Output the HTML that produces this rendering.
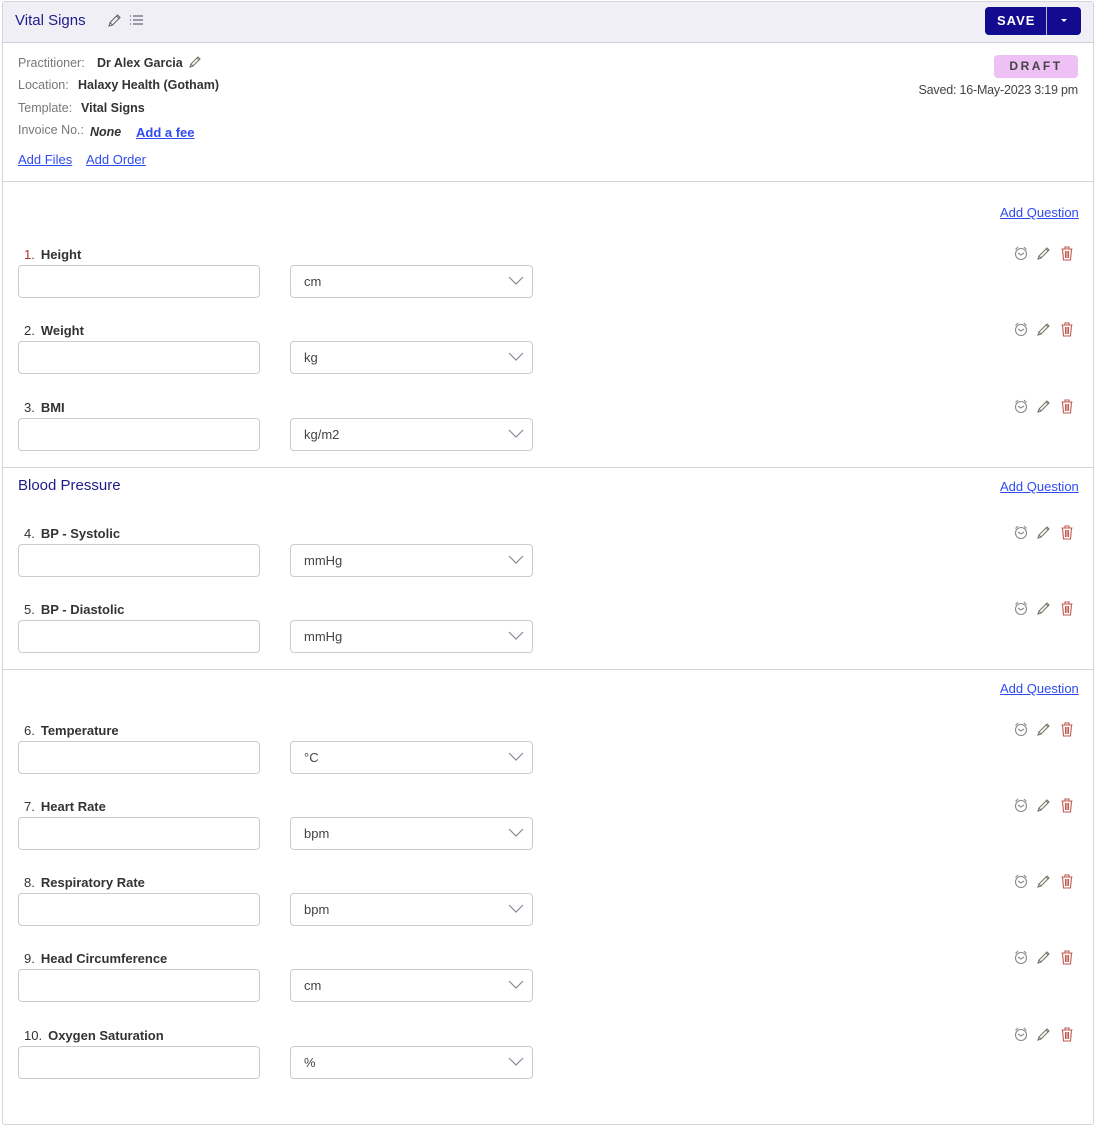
<!DOCTYPE html>
<html><head><meta charset="utf-8"><style>
*{box-sizing:border-box;margin:0;padding:0}
body{width:1096px;height:1126px;background:#fff;font-family:"Liberation Sans",sans-serif;position:relative;overflow:hidden;color:#333}
.card{position:absolute;left:2px;top:1px;width:1092px;height:1124px;border:1px solid #d3d3da;border-radius:3px}
.hdr{position:absolute;left:3px;top:2px;width:1090px;height:41px;background:#f0eff5;border-bottom:1px solid #cfcfd8}
.a{position:absolute;white-space:nowrap}
.lbl{font-size:12.5px;color:#777}
.val{font-size:12.5px;font-weight:bold;color:#333}
.lnk{font-size:13px;color:#2f4bf0;text-decoration:underline}
.hr{position:absolute;left:3px;width:1090px;height:1px;background:#d3d3da}
.ql{position:absolute;left:24px;font-size:13px;color:#333}
.ql b{margin-left:6px}
.in{position:absolute;left:18px;width:242px;height:33px;border:1px solid #ccc;border-radius:4px}
.sel{position:absolute;left:290px;width:243px;height:33px;border:1px solid #ccc;border-radius:4px;font-size:13px;color:#444;padding:8px 0 0 13px}
.sel svg{position:absolute;right:8px;top:10px}
.ic{position:absolute;left:1013px;width:62px;height:16px}
</style></head><body>
<div class="card"></div>
<div class="hdr"></div>
<div class="a" style="left:15px;top:12px;font-size:15px;color:#1e1b8a">Vital Signs</div>
<svg class="a" style="left:107px;top:13px" width="15" height="15" viewBox="0 0 15 15" fill="none" stroke="#667" stroke-width="1.1"><path d="M2 13l1-3.5 7.5-7.5 2.5 2.5-7.5 7.5z M9.5 3l2.5 2.5 M3 9.5l2.5 2.5"/></svg>
<svg class="a" style="left:129px;top:14px" width="15" height="12" viewBox="0 0 15 12" stroke="#667" stroke-width="1.2"><path d="M1 2h1M4 2h10M1 6h1M4 6h10M1 10h1M4 10h10"/></svg>
<div class="a" style="left:985px;top:7px;width:96px;height:28px;background:#120a8f;border-radius:4px"></div>
<div class="a" style="left:997px;top:13px;font-size:13px;font-weight:bold;color:#fff;letter-spacing:1px">SAVE</div>
<div class="a" style="left:1046px;top:7px;width:1px;height:28px;background:#bbb"></div>
<div class="a" style="left:1061px;top:19px;border-left:3.5px solid transparent;border-right:3.5px solid transparent;border-top:3.5px solid #fff"></div>

<div class="a lbl" style="left:18px;top:56px">Practitioner:</div><div class="a val" style="left:97px;top:56px">Dr Alex Garcia</div>
<svg class="a" style="left:188px;top:55px" width="14" height="14" viewBox="0 0 14 14" fill="none" stroke="#776" stroke-width="1.1"><path d="M2 12l1-3 7-7 2 2-7 7z M9 3l2 2 M3 9l2 2"/></svg>
<div class="a lbl" style="left:18px;top:78px">Location:</div><div class="a val" style="left:78px;top:78px">Halaxy Health (Gotham)</div>
<div class="a lbl" style="left:18px;top:101px">Template:</div><div class="a val" style="left:81px;top:101px">Vital Signs</div>
<div class="a lbl" style="left:18px;top:123px">Invoice No.:</div><div class="a val" style="left:90px;top:125px;font-style:italic">None</div>
<div class="a lnk" style="left:136px;top:125px;font-weight:bold">Add a fee</div>
<div class="a lnk" style="left:18px;top:152px">Add Files</div><div class="a lnk" style="left:86px;top:152px">Add Order</div>
<div class="a" style="left:994px;top:55px;width:84px;height:23px;background:#eec0f5;border-radius:4px;font-size:12px;font-weight:bold;color:#444;letter-spacing:2.5px;text-align:center;line-height:23px">DRAFT</div>
<div class="a" style="right:18px;top:83px;font-size:12.5px;letter-spacing:-0.2px;color:#444">Saved: 16-May-2023 3:19 pm</div>

<div class="hr" style="top:181px"></div>
<div class="a lnk" style="left:1000px;top:205px">Add Question</div>
<div class="hr" style="top:467px"></div>
<div class="a" style="left:18px;top:477px;font-size:15px;color:#1e1b8a">Blood Pressure</div>
<div class="a lnk" style="left:1000px;top:479px">Add Question</div>
<div class="hr" style="top:669px"></div>
<div class="a lnk" style="left:1000px;top:681px">Add Question</div>

<svg width="0" height="0" style="position:absolute"><defs>
<g id="icons" fill="none" stroke-width="1.1">
<g stroke="#888"><circle cx="8" cy="9" r="5.5"/><path d="M2.5 4.5l2.5-2.5M13.5 4.5l-2.5-2.5M5 8l3 2 3-2"/></g>
<g stroke="#776" transform="translate(23,0)"><path d="M2 14l1-3 8-8 2 2-8 8z M10 4l2 2 M3 11l2 2"/></g>
<g stroke="#c0584f" transform="translate(46,0)"><path d="M2.5 4h11M6 4V2h4v2M3.5 4l1 11h7l1-11M6.5 6v7M8 6v7M9.5 6v7"/></g>
</g>
<g id="chev"><path d="M1 1l7 7 7-7" fill="none" stroke="#889" stroke-width="1.2"/></g>
</defs></svg>

<div class="ql" style="top:247px"><span style="color:#a33">1.</span><b>Height</b></div>
<div class="in" style="top:265px"></div><div class="sel" style="top:265px">cm<svg width="16" height="10"><use href="#chev"/></svg></div>
<svg class="ic" style="top:245px"><use href="#icons"/></svg>

<div class="ql" style="top:323px">2.<b>Weight</b></div>
<div class="in" style="top:341px"></div><div class="sel" style="top:341px">kg<svg width="16" height="10"><use href="#chev"/></svg></div>
<svg class="ic" style="top:321px"><use href="#icons"/></svg>

<div class="ql" style="top:400px">3.<b>BMI</b></div>
<div class="in" style="top:418px"></div><div class="sel" style="top:418px">kg/m2<svg width="16" height="10"><use href="#chev"/></svg></div>
<svg class="ic" style="top:398px"><use href="#icons"/></svg>

<div class="ql" style="top:526px">4.<b>BP - Systolic</b></div>
<div class="in" style="top:544px"></div><div class="sel" style="top:544px">mmHg<svg width="16" height="10"><use href="#chev"/></svg></div>
<svg class="ic" style="top:524px"><use href="#icons"/></svg>

<div class="ql" style="top:602px">5.<b>BP - Diastolic</b></div>
<div class="in" style="top:620px"></div><div class="sel" style="top:620px">mmHg<svg width="16" height="10"><use href="#chev"/></svg></div>
<svg class="ic" style="top:600px"><use href="#icons"/></svg>

<div class="ql" style="top:723px">6.<b>Temperature</b></div>
<div class="in" style="top:741px"></div><div class="sel" style="top:741px">°C<svg width="16" height="10"><use href="#chev"/></svg></div>
<svg class="ic" style="top:721px"><use href="#icons"/></svg>

<div class="ql" style="top:799px">7.<b>Heart Rate</b></div>
<div class="in" style="top:817px"></div><div class="sel" style="top:817px">bpm<svg width="16" height="10"><use href="#chev"/></svg></div>
<svg class="ic" style="top:797px"><use href="#icons"/></svg>

<div class="ql" style="top:875px">8.<b>Respiratory Rate</b></div>
<div class="in" style="top:893px"></div><div class="sel" style="top:893px">bpm<svg width="16" height="10"><use href="#chev"/></svg></div>
<svg class="ic" style="top:873px"><use href="#icons"/></svg>

<div class="ql" style="top:951px">9.<b>Head Circumference</b></div>
<div class="in" style="top:969px"></div><div class="sel" style="top:969px">cm<svg width="16" height="10"><use href="#chev"/></svg></div>
<svg class="ic" style="top:949px"><use href="#icons"/></svg>

<div class="ql" style="top:1028px">10.<b>Oxygen Saturation</b></div>
<div class="in" style="top:1046px"></div><div class="sel" style="top:1046px">%<svg width="16" height="10"><use href="#chev"/></svg></div>
<svg class="ic" style="top:1026px"><use href="#icons"/></svg>
</body></html>
